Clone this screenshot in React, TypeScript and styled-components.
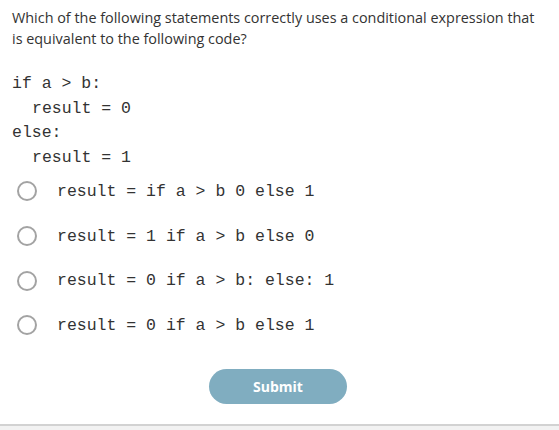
import React from "react";
import styled, { createGlobalStyle } from "styled-components";

const Global = createGlobalStyle`
  html, body { margin: 0; padding: 0; background: #ffffff; }
  body { font-family: "Open Sans", sans-serif; color: #333333; }
`;

const Page = styled.div`
  width: 559px;
  height: 430px;
  display: flex;
  flex-direction: column;
  box-sizing: border-box;
`;

const Content = styled.div`
  flex: 1;
  padding: 7px 14px 0 12px;
  display: flex;
  flex-direction: column;
`;

const Question = styled.p`
  margin: 0;
  font-size: 14.4px;
  line-height: 21px;
  color: #333333;
`;

const CodeBlock = styled.pre`
  margin: 23px 0 0 0;
  font-family: "Liberation Mono", "Courier New", monospace;
  font-size: 16.5px;
  line-height: 24.5px;
  color: #333333;
`;

const CodeLine = styled.div<{ $indent?: boolean }>`
  padding-left: ${(p) => (p.$indent ? "20px" : "0")};
`;

const Options = styled.div`
  margin-top: -1px;
  display: flex;
  flex-direction: column;
`;

const Option = styled.label`
  display: flex;
  align-items: center;
  height: 44.7px;
  padding-left: 5px;
  cursor: pointer;
`;

const Radio = styled.span`
  width: 20px;
  height: 20px;
  box-sizing: border-box;
  border: 2px solid #a3a3a3;
  border-radius: 50%;
  flex-shrink: 0;
`;

const OptionText = styled.span`
  margin-left: 20px;
  font-family: "Liberation Mono", "Courier New", monospace;
  font-size: 16.5px;
  color: #333333;
  white-space: pre;
`;

const ButtonRow = styled.div`
  display: flex;
  justify-content: center;
  padding-right: 1px;
  margin-top: 21px;
`;

const SubmitButton = styled.button`
  width: 138px;
  height: 35px;
  border: none;
  border-radius: 18px;
  background: #80adc0;
  color: #ffffff;
  font-family: "Open Sans", sans-serif;
  font-weight: 700;
  font-size: 14px;
  cursor: pointer;
`;

const Footer = styled.div`
  height: 4px;
  border-top: 2px solid #d2d2d2;
  background: #f2f2f2;
`;

const options = [
  "result = if a > b 0 else 1",
  "result = 1 if a > b else 0",
  "result = 0 if a > b: else: 1",
  "result = 0 if a > b else 1",
];

export default function App() {
  return (
    <Page>
      <Global />
      <Content>
        <Question>
          Which of the following statements correctly uses a conditional expression that is
          equivalent to the following code?
        </Question>
        <CodeBlock>
          <CodeLine>if a &gt; b:</CodeLine>
          <CodeLine $indent>result = 0</CodeLine>
          <CodeLine>else:</CodeLine>
          <CodeLine $indent>result = 1</CodeLine>
        </CodeBlock>
        <Options>
          {options.map((o) => (
            <Option key={o}>
              <Radio />
              <OptionText>{o}</OptionText>
            </Option>
          ))}
        </Options>
        <ButtonRow>
          <SubmitButton>Submit</SubmitButton>
        </ButtonRow>
      </Content>
      <Footer />
    </Page>
  );
}
